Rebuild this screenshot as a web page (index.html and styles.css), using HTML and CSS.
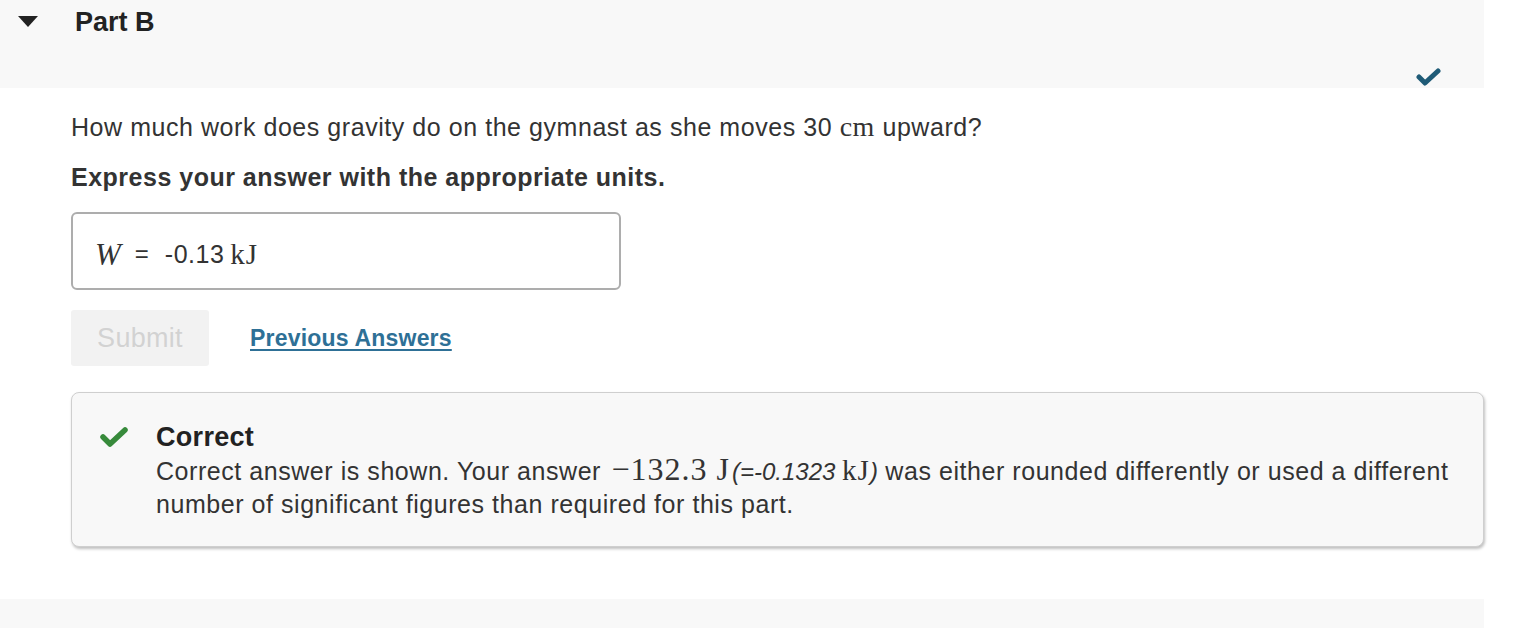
FILE: index.html
```html
<!DOCTYPE html>
<html>
<head>
<meta charset="utf-8">
<link rel="stylesheet" href="styles.css">
</head>
<body>
<div class="part-header">
  <span class="caret"></span>
  <h2 class="part-title">Part B</h2>
  <svg class="done-check" width="26" height="20" viewBox="0 0 26 20"><polyline points="3,9 9,15 22,3" fill="none" stroke="#1f5b77" stroke-width="5" stroke-linecap="round" stroke-linejoin="round"/></svg>
</div>
<div class="content">
  <p class="question">How much work does gravity do on the gymnast as she moves 30 <span class="math">cm</span> upward?</p>
  <p class="instruction">Express your answer with the appropriate units.</p>
  <div class="answer-box">
    <span class="math math-var">W</span>
    <span class="eq">=</span>
    <span class="value">-0.13</span>
    <span class="math unit">kJ</span>
  </div>
  <div class="actions">
    <button class="submit" disabled>Submit</button>
    <a class="prev-link" href="#">Previous Answers</a>
  </div>
  <div class="feedback">
    <svg class="ok-check" width="30" height="22" viewBox="0 0 30 22"><polyline points="4,11 11,18 26,4" fill="none" stroke="#378a3b" stroke-width="5.5" stroke-linecap="round" stroke-linejoin="round"/></svg>
    <div class="feedback-body">
      <div class="feedback-title">Correct</div>
      <div class="feedback-text">Correct answer is shown. Your answer <span class="math big">−132.3 J</span><span class="paren">(=-0.1323 <span class="math pk">kJ</span>)</span> was either rounded differently or used a different number of significant figures than required for this part.</div>
    </div>
  </div>
</div>
<div class="next-bar"></div>
</body>
</html>
```

FILE: styles.css
```css
html, body {
  margin: 0;
  padding: 0;
  background: #ffffff;
}
body {
  font-family: "Liberation Sans", Arial, Helvetica, sans-serif;
  color: #333333;
  width: 1524px;
}
.part-header {
  width: 1484px;
  height: 88px;
  background: #f8f8f8;
  display: flex;
  align-items: flex-start;
  box-sizing: border-box;
  padding-left: 18px;
}
.caret {
  flex-shrink: 0;
  width: 0;
  height: 0;
  border-left: 10px solid transparent;
  border-right: 10px solid transparent;
  border-top: 11px solid #222;
  margin-top: 16px;
}
.part-title {
  margin: 6px 0 0 37px;
  font-size: 27px;
  font-weight: bold;
  color: #222;
  line-height: 32px;
}
.done-check {
  flex-shrink: 0;
  margin-left: auto;
  margin-right: 42px;
  margin-top: 68px;
}
.content {
  padding-left: 71px;
  padding-top: 23px;
}
.question {
  margin: 0;
  font-size: 25px;
  letter-spacing: 0.55px;
  line-height: 32px;
}
.math {
  font-family: "Liberation Serif", "Times New Roman", serif;
  font-style: normal;
  font-size: 1.12em;
  line-height: 1;
}
.instruction {
  margin: 18px 0 0 0;
  font-size: 25px;
  letter-spacing: 0.5px;
  font-weight: bold;
  line-height: 32px;
}
.answer-box {
  margin-top: 19px;
  width: 550px;
  height: 78px;
  box-sizing: border-box;
  border: 2px solid #adadad;
  border-radius: 6px;
  display: flex;
  align-items: center;
  padding-left: 22px;
  padding-top: 6px;
  font-size: 25px;
}
.math-var {
  font-style: italic;
  font-size: 31px;
}
.eq {
  margin-left: 14px;
  font-size: 24px;
}
.value {
  margin-left: 16px;
  letter-spacing: 0.5px;
}
.unit {
  margin-left: 6px;
  font-size: 29px;
  letter-spacing: 1px;
}
.actions {
  margin-top: 20px;
  display: flex;
  align-items: center;
  gap: 41px;
}
.submit {
  width: 138px;
  height: 56px;
  border: none;
  border-radius: 3px;
  background: #f2f2f2;
  color: #d2d2d2;
  font-family: "Liberation Sans", Arial, sans-serif;
  font-size: 27px;
  letter-spacing: 0.3px;
  padding: 0;
}
.prev-link {
  color: #2e7096;
  font-weight: bold;
  font-size: 23px;
  letter-spacing: 0.2px;
  text-decoration: underline;
  text-underline-offset: 3px;
}
.feedback {
  margin-top: 26px;
  width: 1413px;
  height: 155px;
  box-sizing: border-box;
  background: #f8f8f8;
  border: 1px solid #cfcfcf;
  border-radius: 8px;
  box-shadow: 1px 2px 3px rgba(0,0,0,0.25);
  display: flex;
  align-items: flex-start;
  padding: 28px 24px 20px 27px;
}
.ok-check {
  flex-shrink: 0;
  margin-top: 5px;
}
.feedback-body {
  margin-left: 27px;
  font-size: 25px;
  letter-spacing: 0.55px;
  line-height: 32px;
}
.feedback-title {
  font-weight: bold;
  font-size: 27px;
  letter-spacing: 0.3px;
  color: #222;
}
.feedback-text {
  color: #333;
}
.big {
  font-size: 32px;
  letter-spacing: 1px;
  margin-left: 3px;
}
.paren {
  font-style: italic;
  font-size: 24px;
  letter-spacing: 0;
  margin-left: 2px;
}
.pk {
  font-style: normal;
  font-size: 29px;
  letter-spacing: 1px;
}
.next-bar {
  margin-top: 52px;
  width: 1484px;
  height: 29px;
  background: #f8f8f8;
}
```
